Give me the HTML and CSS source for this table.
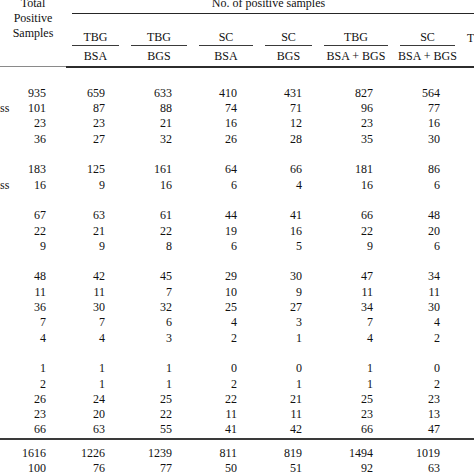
FILE: index.html
```html
<!DOCTYPE html>
<html>
<head>
<meta charset="utf-8">
<title>Positive samples</title>
<link rel="stylesheet" href="styles.css">
</head>
<body>
<table class="tbl">
  <colgroup>
    <col class="c-stub"><col class="c-total"><col class="c-a"><col class="c-b"><col class="c-c"><col class="c-d"><col class="c-e"><col class="c-f"><col class="c-g">
  </colgroup>
  <thead>
    <tr class="h-top">
      <th class="stub-head" rowspan="3"></th>
      <th class="total-head" rowspan="3">Total<br>Positive<br>Samples</th>
      <th class="group-head" colspan="7"><div class="group-label">No. of positive samples</div><div class="group-rule"></div></th>
    </tr>
    <tr class="h-num">
      <th><span class="sub">TBG</span></th>
      <th><span class="sub">TBG</span></th>
      <th><span class="sub">SC</span></th>
      <th><span class="sub">SC</span></th>
      <th><span class="sub">TBG</span></th>
      <th><span class="sub">SC</span></th>
      <th class="cut"><span class="sub-cut">TBG</span></th>
    </tr>
    <tr class="h-den">
      <th>BSA</th>
      <th>BGS</th>
      <th>BSA</th>
      <th>BGS</th>
      <th>BSA + BGS</th>
      <th>BSA + BGS</th>
      <th></th>
    </tr>
  </thead>
  <tbody>
    <tr class="lead"><td></td><td></td><td></td><td></td><td></td><td></td><td></td><td></td><td></td></tr>
    <tr><td></td><td>935</td><td>659</td><td>633</td><td>410</td><td>431</td><td>827</td><td>564</td><td></td></tr>
    <tr><td>ss</td><td>101</td><td>87</td><td>88</td><td>74</td><td>71</td><td>96</td><td>77</td><td></td></tr>
    <tr><td></td><td>23</td><td>23</td><td>21</td><td>16</td><td>12</td><td>23</td><td>16</td><td></td></tr>
    <tr><td></td><td>36</td><td>27</td><td>32</td><td>26</td><td>28</td><td>35</td><td>30</td><td></td></tr>
    <tr><td></td><td></td><td></td><td></td><td></td><td></td><td></td><td></td><td></td></tr>
    <tr><td></td><td>183</td><td>125</td><td>161</td><td>64</td><td>66</td><td>181</td><td>86</td><td></td></tr>
    <tr><td>ss</td><td>16</td><td>9</td><td>16</td><td>6</td><td>4</td><td>16</td><td>6</td><td></td></tr>
    <tr><td></td><td></td><td></td><td></td><td></td><td></td><td></td><td></td><td></td></tr>
    <tr><td></td><td>67</td><td>63</td><td>61</td><td>44</td><td>41</td><td>66</td><td>48</td><td></td></tr>
    <tr><td></td><td>22</td><td>21</td><td>22</td><td>19</td><td>16</td><td>22</td><td>20</td><td></td></tr>
    <tr><td></td><td>9</td><td>9</td><td>8</td><td>6</td><td>5</td><td>9</td><td>6</td><td></td></tr>
    <tr><td></td><td></td><td></td><td></td><td></td><td></td><td></td><td></td><td></td></tr>
    <tr><td></td><td>48</td><td>42</td><td>45</td><td>29</td><td>30</td><td>47</td><td>34</td><td></td></tr>
    <tr><td></td><td>11</td><td>11</td><td>7</td><td>10</td><td>9</td><td>11</td><td>11</td><td></td></tr>
    <tr><td></td><td>36</td><td>30</td><td>32</td><td>25</td><td>27</td><td>34</td><td>30</td><td></td></tr>
    <tr><td></td><td>7</td><td>7</td><td>6</td><td>4</td><td>3</td><td>7</td><td>4</td><td></td></tr>
    <tr><td></td><td>4</td><td>4</td><td>3</td><td>2</td><td>1</td><td>4</td><td>2</td><td></td></tr>
    <tr><td></td><td></td><td></td><td></td><td></td><td></td><td></td><td></td><td></td></tr>
    <tr><td></td><td>1</td><td>1</td><td>1</td><td>0</td><td>0</td><td>1</td><td>0</td><td></td></tr>
    <tr><td></td><td>2</td><td>1</td><td>1</td><td>2</td><td>1</td><td>1</td><td>2</td><td></td></tr>
    <tr><td></td><td>26</td><td>24</td><td>25</td><td>22</td><td>21</td><td>25</td><td>23</td><td></td></tr>
    <tr><td></td><td>23</td><td>20</td><td>22</td><td>11</td><td>11</td><td>23</td><td>13</td><td></td></tr>
    <tr><td></td><td>66</td><td>63</td><td>55</td><td>41</td><td>42</td><td>66</td><td>47</td><td></td></tr>
  </tbody>
  <tfoot>
    <tr class="sum"><td></td><td>1616</td><td>1226</td><td>1239</td><td>811</td><td>819</td><td>1494</td><td>1019</td><td></td></tr>
    <tr class="pct"><td></td><td>100</td><td>76</td><td>77</td><td>50</td><td>51</td><td>92</td><td>63</td><td></td></tr>
  </tfoot>
</table>
</body>
</html>
```

FILE: styles.css
```css
html, body {
  margin: 0;
  padding: 0;
  background: #ffffff;
  overflow: hidden;
}

body {
  font-family: "Liberation Serif", "Times New Roman", serif;
  font-size: 12px;
  color: #111111;
}

.tbl {
  border-collapse: collapse;
  table-layout: fixed;
  width: 501px;
  margin-top: -4px;
}

.c-stub { width: 8px; }
.c-total { width: 58px; }
.c-a { width: 59px; }
.c-b { width: 68px; }
.c-c { width: 66px; }
.c-d { width: 59px; }
.c-e { width: 76px; }
.c-f { width: 67px; }
.c-g { width: 40px; }

.tbl th {
  font-weight: normal;
  padding: 0;
  white-space: nowrap;
}

/* header */
.stub-head,
.total-head {
  vertical-align: top;
  border-bottom: 1px solid #8a8a8a;
}

.total-head {
  line-height: 15px;
  padding: 0 8px 0 0 !important;
  text-align: center;
}

.group-head {
  vertical-align: top;
  padding: 0 0 0 6px !important;
}

.group-label {
  line-height: 15px;
  text-align: center;
  padding-right: 36px;
}

.group-rule {
  margin-top: 2px;
  border-top: 1px solid #262626;
}

.h-num th {
  padding: 16px 6px 0;
  line-height: 15.3px;
}

.sub {
  display: block;
  border-bottom: 1px solid #3a3a3a;
}

.h-num th.cut {
  text-align: left;
  padding-left: 6px;
}

.h-den th {
  padding: 3px 0 1px;
  line-height: 15.3px;
  border-bottom: 2px solid #2c2c2c;
}

/* body */
.tbl td {
  padding: 0;
  height: 15.3px;
  line-height: 15.3px;
  text-align: right;
  white-space: nowrap;
}

.tbl td:nth-child(1) {
  text-align: left;
  overflow: visible;
}

.tbl td:nth-child(2) { padding-right: 20px; }
.tbl td:nth-child(3) { padding-right: 20px; }
.tbl td:nth-child(4) { padding-right: 21px; }
.tbl td:nth-child(5) { padding-right: 22px; }
.tbl td:nth-child(6) { padding-right: 16px; }
.tbl td:nth-child(7) { padding-right: 21px; }
.tbl td:nth-child(8) { padding-right: 21px; }

.tbl tr.lead td {
  height: 18.3px;
}

.tbl tr.sum td {
  border-top: 2px solid #3a3a3a;
  padding-top: 6px;
}

.tbl tr.pct td {
  height: 15px;
  line-height: 15px;
}
```
